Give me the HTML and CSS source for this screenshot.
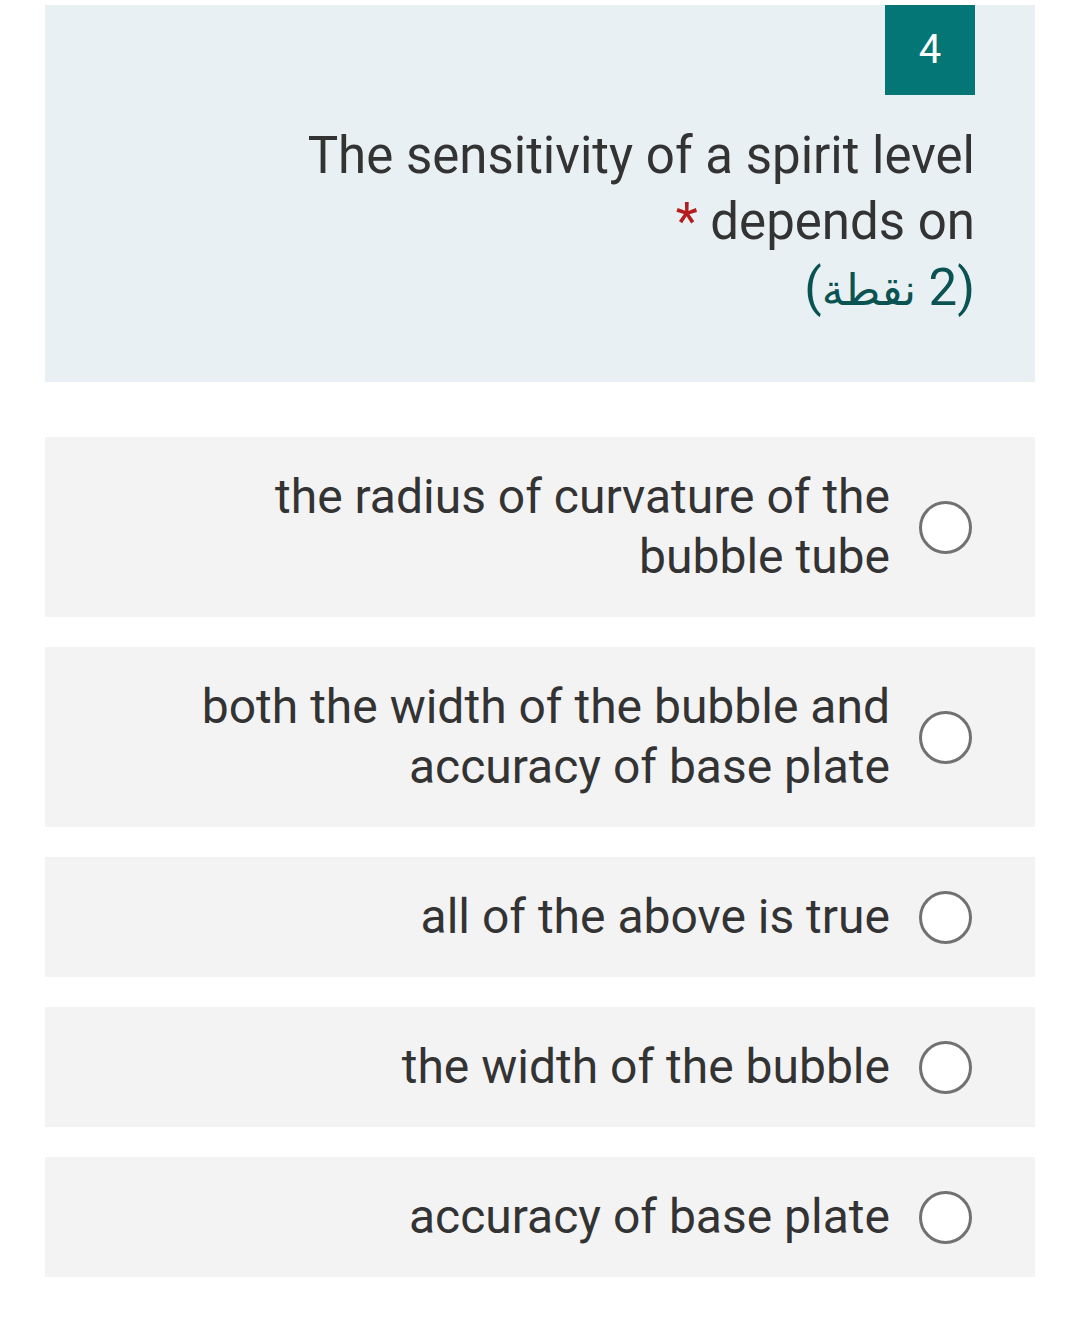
FILE: index.html
```html
<!DOCTYPE html>
<html lang="en">
<head>
<meta charset="utf-8">
<title>Question 4</title>
<link rel="stylesheet" href="styles.css">
</head>
<body>
<main class="page">
  <section class="question">
    <div class="badge">4</div>
    <h1 class="title">The sensitivity of a spirit level <span class="req">*</span> depends on <span class="points" dir="rtl">(2 <span class="ar">نقطة</span>)</span></h1>
  </section>
  <ul class="options">
    <li class="option"><span class="label">the radius of curvature of the bubble tube</span><span class="radio"></span></li>
    <li class="option"><span class="label">both the width of the bubble and accuracy of base plate</span><span class="radio"></span></li>
    <li class="option"><span class="label">all of the above is true</span><span class="radio"></span></li>
    <li class="option"><span class="label">the width of the bubble</span><span class="radio"></span></li>
    <li class="option"><span class="label">accuracy of base plate</span><span class="radio"></span></li>
  </ul>
</main>
</body>
</html>
```
FILE: styles.css
```css
html, body {
  margin: 0;
  padding: 0;
  background: #ffffff;
}
body {
  font-family: Roboto, "Noto Sans", "DejaVu Sans", sans-serif;
  color: #333333;
}
.page {
  padding: 5px 45px 0;
}
.question {
  background: #e8f0f3;
  display: flex;
  flex-direction: column;
  align-items: flex-end;
  padding: 0 60px 61px 200px;
}
.badge {
  width: 90px;
  height: 90px;
  background: #047676;
  color: #ffffff;
  font-size: 40px;
  line-height: 90px;
  text-align: center;
}
.title {
  margin: 28px 0 0 0;
  font-size: 51px;
  line-height: 66px;
  font-weight: 400;
  text-align: right;
  width: 700px;
  color: #333333;
}
.req {
  color: #b51d1d;
}
.points {
  display: block;
  height: 66px;
  color: #0b5252;
  white-space: nowrap;
}
.ar {
  font-size: 44px;
}
.options {
  list-style: none;
  margin: 55px 0 0;
  padding: 0;
  display: flex;
  flex-direction: column;
  gap: 30px;
}
.option {
  background: #f3f3f3;
  display: flex;
  justify-content: flex-end;
  align-items: center;
  padding: 30px 63px 30px 30px;
  gap: 29px;
}
.label {
  font-size: 48px;
  line-height: 60px;
  text-align: right;
  max-width: 730px;
}
.radio {
  flex: none;
  width: 47px;
  height: 47px;
  border: 3px solid #717171;
  border-radius: 50%;
  background: #ffffff;
}
```
